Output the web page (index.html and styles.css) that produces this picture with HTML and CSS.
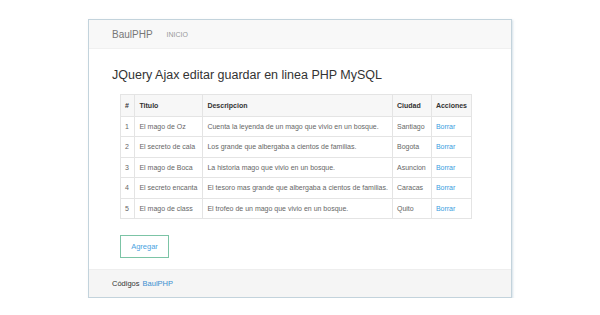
FILE: index.html
```html
<!DOCTYPE html>
<html lang="es">
<head>
  <meta charset="UTF-8" />
  <title>JQuery Ajax editar guardar en linea PHP MySQL</title>
  <link rel="stylesheet" href="styles.css">
</head>
<body>
  <div class="frame">
    <nav class="navbar">
      <a class="brand" href="#">BaulPHP</a>
      <a class="nav-link" href="#">INICIO</a>
    </nav>

    <main class="content">
      <h3>JQuery Ajax editar guardar en linea PHP MySQL</h3>

      <table class="data-table">
        <thead>
          <tr>
            <th class="c-num">#</th>
            <th class="c-title">Titulo</th>
            <th class="c-desc">Descripcion</th>
            <th class="c-city">Ciudad</th>
            <th class="c-act">Acciones</th>
          </tr>
        </thead>
        <tbody>
          <tr>
            <td>1</td>
            <td>El mago de Oz</td>
            <td>Cuenta la leyenda de un mago que vivio en un bosque.</td>
            <td>Santiago</td>
            <td><a href="#">Borrar</a></td>
          </tr>
          <tr>
            <td>2</td>
            <td>El secreto de cala</td>
            <td>Los grande que albergaba a cientos de familias.</td>
            <td>Bogota</td>
            <td><a href="#">Borrar</a></td>
          </tr>
          <tr>
            <td>3</td>
            <td>El mago de Boca</td>
            <td>La historia mago que vivio en un bosque.</td>
            <td>Asuncion</td>
            <td><a href="#">Borrar</a></td>
          </tr>
          <tr>
            <td>4</td>
            <td>El secreto encanta</td>
            <td>El tesoro mas grande que albergaba a cientos de familias.</td>
            <td>Caracas</td>
            <td><a href="#">Borrar</a></td>
          </tr>
          <tr>
            <td>5</td>
            <td>El mago de class</td>
            <td>El trofeo de un mago que vivio en un bosque.</td>
            <td>Quito</td>
            <td><a href="#">Borrar</a></td>
          </tr>
        </tbody>
      </table>

      <button class="btn-add" type="button">Agregar</button>
    </main>

    <footer class="footer">
      Códigos <a href="#">BaulPHP</a>
    </footer>
  </div>
</body>
</html>
```

FILE: styles.css
```css
body {
  margin: 0;
  padding-top: 19px;
  background: #fff;
  font-family: "Liberation Sans", Arial, sans-serif;
  color: #333;
}
a { text-decoration: none; }

.frame {
  width: 422px;
  margin-left: 88px;
  border: 1px solid #c3d3dc;
  box-shadow: 1px 1px 2px rgba(170, 195, 210, 0.5);
}

/* navbar */
.navbar {
  height: 28px;
  display: flex;
  align-items: center;
  padding-left: 23px;
  background: #f8f8f8;
  border-bottom: 1px solid #f0f0f0;
}
.brand {
  font-size: 10px;
  color: #777;
  margin-right: 14px;
}
.nav-link {
  font-size: 7px;
  color: #999;
}

/* content */
.content {
  padding: 18px 23px 11px;
}
.content h3 {
  margin: 0 0 11px;
  font-size: 12.5px;
  line-height: 16px;
  font-weight: normal;
  color: #333;
}

.data-table {
  margin-left: 8px;
  width: 352px;
  border-collapse: collapse;
  font-size: 7px;
  color: #666;
}
.data-table th,
.data-table td {
  border: 1px solid #e4e4e4;
  padding: 0 4px;
  height: 19.5px;
  text-align: left;
  white-space: nowrap;
}
.data-table th {
  height: 20.5px;
  color: #333;
  font-weight: bold;
  background: #f7f7f7;
}
.data-table a { color: #3a9ee0; }
.c-num { width: 7px; }
.c-title { width: 60px; }
.c-desc { width: 178px; }
.c-city { width: 31px; }

.btn-add {
  margin: 16px 0 0 8px;
  width: 49px;
  height: 23px;
  padding: 0;
  background: #fff;
  border: 1px solid #7cc4a6;
  color: #4aa3df;
  font-family: "Liberation Sans", Arial, sans-serif;
  font-size: 7.5px;
  cursor: pointer;
}

/* footer */
.footer {
  height: 27px;
  display: flex;
  align-items: center;
  padding-left: 23px;
  background: #f5f5f5;
  border-top: 1px solid #eee;
  font-size: 7.5px;
  color: #333;
}
.footer a {
  color: #3a8fd0;
  margin-left: 3px;
}
```
